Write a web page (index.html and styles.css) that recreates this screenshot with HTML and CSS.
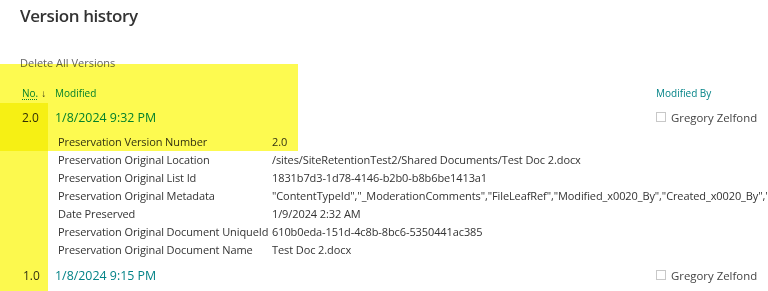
FILE: index.html
```html
<!DOCTYPE html>
<html>
<head>
<meta charset="utf-8">
<link rel="stylesheet" href="styles.css">
</head>
<body>
<div class="page">
  <h1 class="title">Version history</h1>
  <div class="toolbar">Delete All Versions</div>
  <div class="row header">
    <div class="c-no"><span class="sortlink">No.</span><span class="arrow">↓</span></div>
    <div class="c-mod">Modified</div>
    <div class="c-by">Modified By</div>
  </div>
  <div class="row version">
    <div class="c-no">2.0</div>
    <div class="c-mod"><span class="date">1/8/2024 9:32 PM</span></div>
    <div class="c-by"><span class="box"></span>Gregory Zelfond</div>
  </div>
  <div class="props">
    <div class="label">Preservation Version Number</div><div class="value">2.0</div>
    <div class="label">Preservation Original Location</div><div class="value">/sites/SiteRetentionTest2/Shared Documents/Test Doc 2.docx</div>
    <div class="label">Preservation Original List Id</div><div class="value">1831b7d3-1d78-4146-b2b0-b8b6be1413a1</div>
    <div class="label">Preservation Original Metadata</div><div class="value clip">"ContentTypeId","_ModerationComments","FileLeafRef","Modified_x0020_By","Created_x0020_By","File_x0020_Type"</div>
    <div class="label">Date Preserved</div><div class="value">1/9/2024 2:32 AM</div>
    <div class="label">Preservation Original Document UniqueId</div><div class="value">610b0eda-151d-4c8b-8bc6-5350441ac385</div>
    <div class="label">Preservation Original Document Name</div><div class="value">Test Doc 2.docx</div>
  </div>
  <div class="row version v2">
    <div class="c-no">1.0</div>
    <div class="c-mod"><span class="date">1/8/2024 9:15 PM</span></div>
    <div class="c-by"><span class="box"></span>Gregory Zelfond</div>
  </div>
</div>
<div class="hl hl-top"></div>
<div class="hl hl-mid"></div>
<div class="hl hl-dark"></div>
<div class="hl hl-strip"></div>
</body>
</html>
```
FILE: styles.css
```css
html, body {
  margin: 0;
  padding: 0;
  background: #ffffff;
  width: 768px;
  height: 291px;
  overflow: hidden;
  font-family: "Open Sans", "Noto Sans", "Liberation Sans", sans-serif;
  color: #333333;
}
.page {
  padding: 4px 0 0 20px;
  white-space: nowrap;
}
.title {
  margin: 0;
  font-size: 17px;
  line-height: 24px;
  font-weight: 600;
  letter-spacing: -0.4px;
  color: #333333;
}
.toolbar {
  margin-top: 25px;
  font-size: 11px;
  line-height: 20px;
  color: #666666;
}
.row {
  display: flex;
  align-items: center;
}
.c-no {
  width: 35px;
  flex: none;
}
.c-mod {
  width: 601px;
  flex: none;
}
.c-by {
  flex: none;
  display: flex;
  align-items: center;
}
.header {
  margin-top: 10px;
  height: 20px;
  font-size: 10px;
  color: #038387;
}
.header .c-no { padding-left: 2px; width: 33px; }
.sortlink {
  text-decoration: underline dotted;
  text-underline-offset: 2px;
}
.arrow {
  color: #333333;
  margin-left: 3px;
  font-size: 10px;
}
.version {
  margin-top: 2px;
  height: 24px;
  font-size: 12px;
}
.version .c-no { padding-left: 2px; width: 33px; color: #333333; font-size: 12px; }
.date { color: #038387; font-size: 12.4px; }
.version .c-by { color: #444444; font-size: 11.4px; }
.box {
  display: inline-block;
  width: 8px;
  height: 8px;
  border: 1px solid #c8c8c8;
  margin-right: 5px;
}
.props {
  margin-top: 4px;
  margin-left: 38px;
  display: grid;
  grid-template-columns: 214px 496px;
  grid-auto-rows: 18px;
  font-size: 11px;
  letter-spacing: -0.1px;
  line-height: 18px;
  color: #333333;
}
.clip { overflow: hidden; }
.v2 { margin-top: 4px; }
.v2 .c-no { padding-left: 3px; width: 32px; }

.hl {
  position: absolute;
  mix-blend-mode: multiply;
  pointer-events: none;
}
.hl-top { left: 0; top: 64px; width: 298px; height: 39px; background: rgb(253, 250, 80); }
.hl-mid { left: 48px; top: 103px; width: 250px; height: 48px; background: rgb(253, 250, 80); }
.hl-dark { left: 0; top: 103px; width: 48px; height: 48px; background: rgb(246, 240, 20); }
.hl-strip { left: 0; top: 151px; width: 48px; height: 140px; background: rgb(252, 249, 78); }
```
